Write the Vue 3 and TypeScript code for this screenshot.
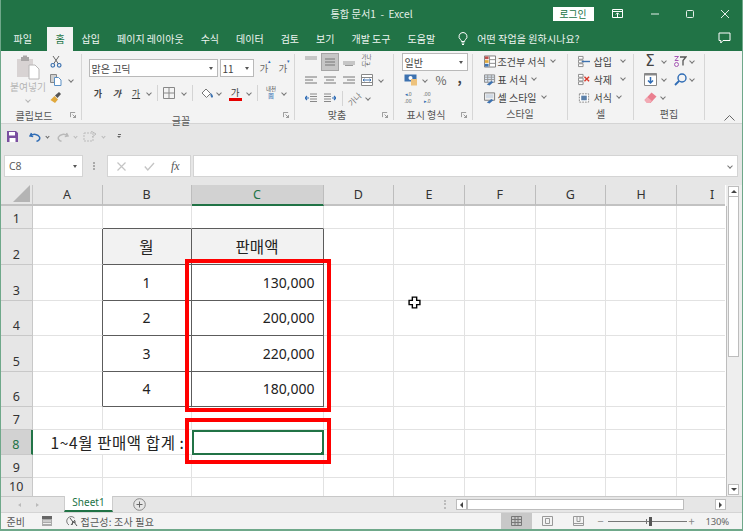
<script setup lang="ts">
const tabs = ['파일', '홈', '삽입', '페이지 레이아웃', '수식', '데이터', '검토', '보기', '개발 도구', '도움말']
const colWidths = [31.5, 70, 89, 132, 70.7, 70.7, 70.7, 70.7, 70.7, 48.5]
const colNames = ['', 'A', 'B', 'C', 'D', 'E', 'F', 'G', 'H', 'I']
const rowHeights = [21, 23, 36, 35.5, 35.5, 35.5, 35.5, 23, 25, 22.5, 19.5]
const gridCols = colWidths.map((w) => w + 'px').join(' ')
const gridRows = rowHeights.map((h) => h + 'px').join(' ')

const content: Record<string, string> = {
  'B2': '월', 'C2': '판매액',
  'B3': '1', 'B4': '2', 'B5': '3', 'B6': '4',
  'C3': '130,000', 'C4': '200,000', 'C5': '220,000', 'C6': '180,000',
  'B8': '1~4월 판매액 합계 :'
}

interface Cell { key: string; text: string; cls: string[] }
const cells: Cell[] = []
for (let r = 0; r < rowHeights.length; r++) {
  for (let c = 0; c < colNames.length; c++) {
    const cls: string[] = []
    let text = ''
    const key = colNames[c] + r
    if (r === 0 && c === 0) {
      cls.push('corner')
    } else if (r === 0) {
      cls.push('col-head')
      text = colNames[c]
      if (c === 3) cls.push('head-on')
      if (c === 9) cls.push('head-cut')
    } else if (c === 0) {
      cls.push('row-head')
      text = String(r)
      if (r === 8) cls.push('row-on')
    } else {
      cls.push('cell')
      text = content[key] ?? ''
      const inTable = r >= 2 && r <= 6 && (c === 2 || c === 3)
      if (inTable) cls.push('tbl')
      if (r === 2 && inTable) cls.push('tbl-head')
      if (r >= 3 && r <= 6 && c === 3) cls.push('num')
      if (r >= 2 && r <= 6 && c === 1) cls.push('tbl-left')
      if (r === 1 && (c === 2 || c === 3)) cls.push('tbl-top')
      if (r === 8 && c === 1) cls.push('no-right')
      if (r === 8 && c === 2) cls.push('overflow-left')
      if (r === 8 && c === 3) cls.push('selected')
      if (r === 10) cls.push('last-row')
      if (c === 9) cls.push('last-col')
    }
    cells.push({ key, text, cls })
  }
}
</script>

<template>
  <div class="win">
    <header class="title">
      <div class="title-text">통합 문서1&nbsp; -&nbsp; Excel</div>
      <div class="login">로그인</div>
      <svg class="t-ic ic-display" viewBox="0 0 12 10"><path d="M.5.5h10v8H.5zM.5 2.5h10M5.5 8V4M3.8 5.5l1.7-1.7 1.7 1.7" fill="none" stroke="#fff"/></svg>
      <svg class="t-ic ic-min" viewBox="0 0 10 10"><path d="M1 5h8" stroke="#e4efe9"/></svg>
      <svg class="t-ic ic-max" viewBox="0 0 10 10"><rect x="1.5" y="1.5" width="7" height="7" rx="1" fill="none" stroke="#e4efe9"/></svg>
      <svg class="t-ic ic-close" viewBox="0 0 10 10"><path d="M1 1l8 8M9 1l-8 8" stroke="#e4efe9"/></svg>
    </header>

    <nav class="tabs">
      <span v-for="t in tabs" :key="t" class="tab" :class="{ active: t === '홈' }">{{ t }}</span>
      <svg class="bulb" viewBox="0 0 12 14"><path d="M6 1a4 4 0 0 0-2.4 7.2c.6.5.8 1 .8 1.8h3.2c0-.8.2-1.3.8-1.8A4 4 0 0 0 6 1zM4.6 11.5h2.8M5 13h2" fill="none" stroke="#fff"/></svg>
      <span class="tell">어떤 작업을 원하시나요?</span>
      <svg class="comment" viewBox="0 0 13 12"><path d="M1 1h11v7.5H5L2.8 11V8.5H1z" fill="none" stroke="#fff"/></svg>
    </nav>

    <section class="ribbon">
      <div class="group g-clip">
        <div class="g-body clip-body">
          <div class="paste">
            <svg class="paste-ic" viewBox="0 0 24 25">
              <path d="M1 4h16v18H1z" fill="#d8d3d3"/>
              <path d="M5 2h8v4H5z" fill="#a9a6a6"/>
              <path d="M7 .5h4v2H7z" fill="#a9a6a6"/>
              <path d="M13 10h6l4 4v10H13z" fill="#fff" stroke="#b8b6b6"/>
            </svg>
            <span class="paste-label">붙여넣기</span>
            <i class="chev light"></i>
          </div>
          <div class="clip-tools">
            <svg class="ic" viewBox="0 0 12 13"><path d="M3 1l5.5 8M9 1L3.5 9" fill="none" stroke="#666"/><circle cx="2.8" cy="10.3" r="1.8" fill="none" stroke="#3d72b0" stroke-width="1.2"/><circle cx="9.2" cy="10.3" r="1.8" fill="none" stroke="#3d72b0" stroke-width="1.2"/></svg>
            <div class="tool-row">
              <svg class="ic" viewBox="0 0 12 13"><path d="M.5 1.5h6v8h-6z" fill="#cfcfcf" stroke="#888"/><path d="M4.5 4.5h4l2.500 2.500v5.500h-6.500z" fill="#fff" stroke="#5a8fc4"/></svg>
              <i class="chev dark"></i>
            </div>
            <svg class="ic" viewBox="0 0 12 13"><path d="M.5 9l4-4 3.500 3.500-3 3.500z" fill="#e0a83c"/><path d="M5 4.500l4-3.500 2 2-3.500 4z" fill="#555"/></svg>
          </div>
        </div>
        <div class="g-label has-launch">클립보드<svg class="launch" viewBox="0 0 7 7"><path d="M.5 6V.5H6M3 3l3.500 3.500M6.500 3.500v3h-3" fill="none" stroke="#888"/></svg></div>
      </div>

      <div class="group g-font">
        <div class="g-body font-body">
          <div class="font-row">
            <div class="select font-name"><span>맑은 고딕</span><i class="caret"></i></div>
            <div class="select font-size"><span>11</span><i class="caret"></i></div>
            <span class="ga-btn ga-first">가<sup>▴</sup></span>
            <span class="ga-btn">가<sup>▾</sup></span>
          </div>
          <div class="font-row second">
            <b class="ga b1">가</b>
            <em class="ga i1">가</em>
            <span class="ga u1">가</span>
            <i class="chev dark c-a"></i>
            <span class="vsep sep-a"></span>
            <svg class="ic border-ic" viewBox="0 0 12 12"><path d="M.5.5h11v11H.5zM6 .5v11M.5 6h11" fill="none" stroke="#888"/></svg>
            <i class="chev dark c-b"></i>
            <span class="vsep sep-b"></span>
            <svg class="ic fill-ic" viewBox="0 0 14 13"><path d="M2 6l4-4 4.500 4.500-4 4z" fill="#fff" stroke="#777"/><path d="M10.500 6c1.500 1 2.500 2.500 2.500 3.500 0 1-1 1.500-1.500 1s-1.500-2-1-4.500z" fill="#3d72b0"/></svg>
            <i class="chev dark c-c"></i>
            <span class="color-ga">가<em></em></span>
            <i class="chev dark c-d"></i>
            <span class="vsep sep-c"></span>
            <span class="phon"><span>내천</span><span class="blue">圓</span></span>
            <i class="chev dark c-e"></i>
          </div>
        </div>
        <div class="g-label has-launch">글꼴<svg class="launch" viewBox="0 0 7 7"><path d="M.5 6V.5H6M3 3l3.500 3.500M6.500 3.500v3h-3" fill="none" stroke="#888"/></svg></div>
      </div>

      <div class="group g-align">
        <div class="g-body align-body">
          <div class="al-row">
            <span class="al-btn"><svg class="al al-top" viewBox="0 0 12 8"><path d="M0 1h12M0 3h12" stroke="#999"/></svg></span>
            <span class="al-btn on"><svg class="al" viewBox="0 0 12 8"><path d="M1 1h10M1 4h10M1 7h10" stroke="#777"/></svg></span>
            <span class="al-btn"><svg class="al" viewBox="0 0 12 8"><path d="M0 4h12M0 6h12M2 7.500h8" stroke="#999"/></svg></span>
            <span class="wrap-ic"><span>가나</span><span>다↵</span></span>
          </div>
          <div class="al-row">
            <span class="al-btn"><svg class="al" viewBox="0 0 12 8"><path d="M0 1h12M0 4h8M0 7h12" stroke="#777"/></svg></span>
            <span class="al-btn"><svg class="al" viewBox="0 0 12 8"><path d="M0 1h12M2 4h8M0 7h12" stroke="#777"/></svg></span>
            <span class="al-btn"><svg class="al" viewBox="0 0 12 8"><path d="M0 1h12M4 4h8M0 7h12" stroke="#777"/></svg></span>
            <svg class="merge" viewBox="0 0 12 12"><path d="M.5.5h11v11H.5z" fill="#fff" stroke="#888"/><path d="M.5 3.500h11M.5 8.500h11" stroke="#888"/><path d="M2 6h8M3.500 4.800L2 6l1.500 1.200M8.500 4.800L10 6 8.500 7.200" fill="none" stroke="#3d72b0"/></svg>
            <i class="chev dark c-m"></i>
          </div>
          <div class="al-row">
            <span class="al-btn"><svg class="ind" viewBox="0 0 12 10"><path d="M5 1h7M5 3.500h7M5 6h7M5 8.500h7" stroke="#888"/><path d="M0 5h4M2 3L0 5l2 2" fill="none" stroke="#2f6cb5" stroke-width="1.200"/></svg></span>
            <span class="al-btn"><svg class="ind" viewBox="0 0 12 10"><path d="M0 1h7M0 3.500h7M0 6h7M0 8.500h7" stroke="#888"/><path d="M8 5h4M10 3l2 2-2 2" fill="none" stroke="#2f6cb5" stroke-width="1.200"/></svg></span>
            <span class="vsep sep-d"></span>
            <span class="orient">가나</span>
            <i class="chev dark c-o"></i>
          </div>
        </div>
        <div class="g-label has-launch">맞춤<svg class="launch" viewBox="0 0 7 7"><path d="M.5 6V.5H6M3 3l3.500 3.500M6.500 3.500v3h-3" fill="none" stroke="#888"/></svg></div>
      </div>

      <div class="group g-num">
        <div class="g-body num-body">
          <div class="select num-select"><span>일반</span><i class="caret"></i></div>
          <div class="num-row">
            <svg class="ic cur" viewBox="0 0 14 12"><rect x=".5" y=".5" width="12" height="7" fill="#3d72b0"/><circle cx="6.500" cy="4" r="2" fill="#fff"/><rect x="7" y="5" width="6" height="6.500" fill="#edc27c"/></svg>
            <i class="chev dark c-n"></i>
            <span class="pct">%</span>
            <span class="comma">,</span>
          </div>
          <div class="num-row dec">
            <span class="dec-ic"><span><i>◂</i>.0</span><span>.00</span></span>
            <span class="dec-ic"><span>.00</span><span><i>▸</i>.0</span></span>
          </div>
        </div>
        <div class="g-label has-launch">표시 형식<svg class="launch" viewBox="0 0 7 7"><path d="M.5 6V.5H6M3 3l3.500 3.500M6.500 3.500v3h-3" fill="none" stroke="#888"/></svg></div>
      </div>

      <div class="group g-style">
        <div class="g-body list-body">
          <div class="li">
            <svg class="ic l-ic" viewBox="0 0 13 13"><path d="M.5.5h12v12H.5z" fill="#fff" stroke="#777"/><path d="M1 1h4v3H1z" fill="#c0504d"/><path d="M1 5h4v3H1z" fill="#e0a83c"/><path d="M1 9h4v3H1z" fill="#3d72b0"/><path d="M6 1v11M6 4.500h6M6 8.500h6" stroke="#888"/></svg>
            <span>조건부 서식</span><i class="chev dark"></i>
          </div>
          <div class="li">
            <svg class="ic l-ic" viewBox="0 0 13 13"><path d="M.5 1.500h11v8H.5z" fill="#dbe6f2" stroke="#888"/><path d="M.5 4h11M.5 6.500h11M4 1.500v8M8 1.500v8" stroke="#999"/><path d="M3 12l5-4 2 1.500-4 3.500z" fill="#3d72b0"/></svg>
            <span>표 서식</span><i class="chev dark"></i>
          </div>
          <div class="li">
            <svg class="ic l-ic" viewBox="0 0 13 13"><path d="M.5 1.500h11v8H.5z" fill="#eee" stroke="#777"/><path d="M2 3h8v4H2z" fill="#cfd8e3"/><path d="M3 12l5-4 2 1.500-4 3.500z" fill="#3d72b0"/></svg>
            <span>셀 스타일</span><i class="chev dark"></i>
          </div>
        </div>
        <div class="g-label">스타일</div>
      </div>

      <div class="group g-cell">
        <div class="g-body list-body cell-list">
          <div class="li">
            <svg class="ic l-ic" viewBox="0 0 13 12"><path d="M.5.500h5v3h-5zM.5 4.500h5v3h-5zM.5 8.500h5v3h-5z" fill="#fff" stroke="#888"/><path d="M4 6h9" stroke="#3d72b0" stroke-width="1.500"/></svg>
            <span>삽입</span><i class="chev dark gapc"></i>
          </div>
          <div class="li">
            <svg class="ic l-ic" viewBox="0 0 13 12"><path d="M.5.500h5v3h-5zM.5 4.500h5v3h-5zM.5 8.500h5v3h-5z" fill="#fff" stroke="#888"/><path d="M7 3l5 5M12 3L7 8" stroke="#d9382a" stroke-width="1.500"/></svg>
            <span>삭제</span><i class="chev dark gapc"></i>
          </div>
          <div class="li">
            <svg class="ic l-ic" viewBox="0 0 13 12"><path d="M1.500 2h10v9h-10z" fill="#fff" stroke="#888" stroke-dasharray="2 1"/><path d="M3.500 4h6v5h-6z" fill="#5a7fa8"/></svg>
            <span>서식</span><i class="chev dark"></i>
          </div>
        </div>
        <div class="g-label">셀</div>
      </div>

      <div class="group g-edit">
        <div class="g-body edit-body">
          <div class="ed-row">
            <span class="sigma">Σ</span><i class="chev dark c-s"></i>
            <svg class="ic sort" viewBox="0 0 13 12"><path d="M.5 1h4L1 5h3.500" fill="none" stroke="#a658b5"/><circle cx="2.500" cy="9" r="2" fill="none" stroke="#a658b5"/><path d="M6 1.500h6l-3 3.500v5" fill="none" stroke="#555" stroke-width="1.300"/></svg>
            <i class="chev dark"></i>
          </div>
          <div class="ed-row">
            <svg class="ic down" viewBox="0 0 13 13"><path d="M.5.500h12v12H.5z" fill="#fff" stroke="#888"/><path d="M.5 1.500h12" stroke="#888" stroke-width="2"/><path d="M6.500 4v6M4 7.500l2.500 2.500L9 7.500" fill="none" stroke="#2f6cb5" stroke-width="1.500"/></svg>
            <i class="chev dark c-s"></i>
            <svg class="ic find" viewBox="0 0 13 13"><circle cx="8" cy="5" r="4" fill="none" stroke="#2f6cb5" stroke-width="1.400"/><path d="M5 8l-4 4" stroke="#2f6cb5" stroke-width="1.800"/></svg>
            <i class="chev dark"></i>
          </div>
          <div class="ed-row">
            <svg class="ic erase" viewBox="0 0 13 13"><path d="M.5 9l7-7.500 5 4-6 6.500H3z" fill="#ea7f8f"/><path d="M.5 9l3-3 4.500 4-2 2H3z" fill="#f2aab4"/></svg>
            <i class="chev dark"></i>
          </div>
        </div>
        <div class="g-label">편집</div>
      </div>

      <div class="collapse-area">
        <svg class="collapse" viewBox="0 0 11 6"><path d="M.5 5.500L5.500.5l5 5" fill="none" stroke="#666"/></svg>
      </div>
    </section>

    <div class="qat">
      <svg class="q-save" viewBox="0 0 11 11"><path d="M0 0h9l2 2v9H0z" fill="#7a4fa0"/><path d="M2 1h6v3.500H2z" fill="#fff"/><path d="M2.500 7h6v4h-6z" fill="#fff"/></svg>
      <svg class="q-undo" viewBox="0 0 12 10"><path d="M2.500 1L1 4l3.200.6M1.500 3.800c3-2.500 7.500-1.500 9 1.200 1 2.500-1.500 4-3 4.300" fill="none" stroke="#2f6cb5" stroke-width="1.500"/></svg>
      <i class="chev tiny c-q1"></i>
      <svg class="q-redo" viewBox="0 0 12 10"><path d="M9.500 1L11 4l-3.200.6M10.500 3.800c-3-2.500-7.500-1.500-9 1.200-1 2.500 1.500 4 3 4.300" fill="none" stroke="#b9b9b9" stroke-width="1.500"/></svg>
      <i class="chev tiny lightc c-q2"></i>
      <svg class="q-sheet" viewBox="0 0 14 11"><path d="M1 2h9v8H1z" fill="none" stroke="#bbb" stroke-dasharray="2 1"/><path d="M8 0l5 3-4 3" fill="none" stroke="#bbb"/></svg>
      <i class="chev tiny lightc c-q3"></i>
      <span class="q-more"></span>
    </div>

    <div class="formula">
      <div class="name-box"><span>C8</span><i class="caret"></i></div>
      <span class="dots"></span>
      <div class="fx-box">
        <svg class="fx-x" viewBox="0 0 9 9"><path d="M.5.500l8 8M8.500.500l-8 8" stroke="#c4c4c4" stroke-width="1.200"/></svg>
        <svg class="fx-v" viewBox="0 0 11 9"><path d="M.8 4.500l3 3.500L10 1" fill="none" stroke="#c4c4c4" stroke-width="1.300"/></svg>
        <span class="fx">fx</span>
      </div>
      <div class="fbar"><i class="chev dark"></i></div>
    </div>

    <div class="sheet-area">
      <div class="sheet">
        <div class="grid" :style="{ gridTemplateColumns: gridCols, gridTemplateRows: gridRows }">
          <div v-for="c in cells" :key="c.key" :class="c.cls">
            <svg v-if="c.cls.includes('corner')" class="tri" viewBox="0 0 17 17"><path d="M17 0v17H0z" fill="#b4b4b4"/></svg>
            <span v-else>{{ c.text }}</span>
            <i v-if="c.cls.includes('selected')" class="handle"></i>
          </div>
        </div>
        <div class="red red-a"></div>
        <div class="red red-b"></div>
        <svg class="cursor" viewBox="0 0 12 12"><path d="M4 1h4v3h3v4H8v3H4V8H1V4h3z" fill="#fff" stroke="#000" stroke-width="1.300"/></svg>
      </div>
      <div class="vscroll">
        <div class="sb-btn"><i class="up"></i></div>
        <div class="v-thumb"></div>
        <div class="sb-btn v-down"><i class="down-tri"></i></div>
      </div>
    </div>

    <div class="sheetbar">
      <i class="nav-l"></i>
      <i class="nav-r"></i>
      <div class="sheet-tab">Sheet1</div>
      <svg class="add" viewBox="0 0 13 13"><circle cx="6.500" cy="6.500" r="5.800" fill="none" stroke="#888"/><path d="M6.500 3.500v6M3.500 6.500h6" stroke="#666"/></svg>
      <span class="h-dots"></span>
      <div class="hscroll">
        <div class="sb-btn"><i class="left-tri"></i></div>
        <div class="h-thumb"></div>
        <div class="sb-btn h-right"><i class="right-tri"></i></div>
      </div>
    </div>

    <footer class="status">
      <span class="st-ready">준비</span>
      <svg class="st-macro" viewBox="0 0 10 10"><path d="M0 0h10v3H0z" fill="#666"/><path d="M0 3h10v7H0z" fill="#aaa"/><path d="M1 4.500h8v1H1zM1 7h8v1H1z" fill="#eee"/></svg>
      <svg class="st-acc" viewBox="0 0 13 12"><path d="M9.500 3A4.500 4.500 0 1 0 4 10" fill="none" stroke="#777"/><path d="M5 3l3 4-1 3M7 7l4 0M9 7l3 4M10 5l-4 5" fill="none" stroke="#555"/></svg>
      <span class="st-text">접근성: 조사 필요</span>
      <div class="st-right">
        <span class="view on"><svg viewBox="0 0 11 10"><path d="M.5.500h10v9H.5zM4 .5v9M7 .5v9M.5 3.500h10M.5 6.500h10" fill="none" stroke="#777"/></svg></span>
        <span class="view"><svg viewBox="0 0 11 10"><path d="M.5.500h10v9H.5z" fill="none" stroke="#999"/><path d="M3.500 2.500h4v5h-4z" fill="none" stroke="#999"/></svg></span>
        <span class="view"><svg viewBox="0 0 11 10"><path d="M.5.500h10v9H.5zM.5 7.500h10M4 .5v5h3v-5" fill="none" stroke="#999"/></svg></span>
        <span class="zm minus">−</span>
        <div class="slider"><i class="tick"></i><i class="thumb"></i></div>
        <span class="zm plus">+</span>
        <span class="pct-text">130%</span>
      </div>
    </footer>
  </div>
</template>

<style>
html, body { margin: 0; padding: 0; background: #fff; }
</style>

<style scoped>
.win {
  width: 743px; height: 531px; box-sizing: border-box; overflow: hidden;
  display: flex; flex-direction: column; background: #e6e6e6;
  border-left: 1.5px solid #6fa88a; border-right: 1.5px solid #6fa88a; border-bottom: 2px solid #6fa88a;
  font-family: "Noto Sans CJK KR", "Noto Sans", sans-serif; color: #444;
  position: relative;
}
svg { display: block; flex: none; }
i { display: block; flex: none; font-style: normal; }

.title { height: 26px; flex: none; background: #217346; margin: 0 -1.5px; position: relative; display: flex; align-items: center; color: #fff; }
.title-text { margin-left: 331px; width: 84px; font-size: 10.2px; white-space: nowrap; color: #e3efe8; padding-top: 1px; }
.login { margin-left: 138px; width: 41px; height: 14px; background: #fff; color: #217346; font-size: 9.8px; line-height: 14px; text-align: center; margin-top: 2px; }
.t-ic { width: 12px; height: 10px; }
.ic-display { margin-left: 18px; margin-top: 2px; }
.ic-min { margin-left: 26px; width: 10px; margin-top: 2px; }
.ic-max { margin-left: 25px; width: 10px; margin-top: 2px; }
.ic-close { margin-left: 25px; width: 10px; margin-top: 2px; }

.tabs { height: 25px; flex: none; background: #217346; margin: 0 -1.5px; display: flex; align-items: flex-end; padding-left: 14px; color: #eef5f1; font-size: 10px; position: relative; }
.tab { height: 25px; line-height: 25px; margin-right: 17px; white-space: nowrap; }
.tab.active { background: #f3f3f3; color: #217346; padding: 0 8px; margin-left: -1.5px; margin-right: 9px; height: 24px; line-height: 24px; }
.bulb { width: 12px; height: 15px; margin: 0 8px 5px 5px; }
.tell { height: 25px; line-height: 25px; white-space: nowrap; letter-spacing: .1px; }
.comment { position: absolute; right: 13px; top: 6px; width: 13px; height: 12px; }

.ribbon { height: 72px; flex: none; background: #f3f3f3; border-bottom: 1px solid #d4d4d4; display: flex; box-sizing: content-box; }
.group { display: flex; flex-direction: column; border-right: 1px solid #d6d6d6; margin: 3px 0 3px; height: 66px; box-sizing: border-box; position: relative; }
.g-body { height: 56px; flex: none; }
.g-label { height: 10px; line-height: 12px; font-size: 10px; text-align: center; color: #555; white-space: nowrap; }
.g-label.has-launch { padding-right: 14px; }
.launch { position: absolute; right: 5px; bottom: 2px; width: 6px; height: 6px; }
.g-clip { width: 81px; }
.g-font { width: 213px; }
.g-align { width: 99px; }
.g-num { width: 79px; }
.g-style { width: 95px; }
.g-cell { width: 66px; }
.g-edit { width: 71px; }

.chev { width: 3px; height: 3px; border-right: 1px solid #999; border-bottom: 1px solid #999; transform: rotate(45deg); }
.chev.dark { border-color: #777; }
.chev.light { border-color: #b5b5b5; }
.chev.tiny { width: 2px; height: 2px; border-color: #666; }
.chev.lightc { border-color: #bbb; }
.caret { width: 0; height: 0; border-left: 2.500px solid transparent; border-right: 2.500px solid transparent; border-top: 3px solid #555; }

.clip-body { display: flex; padding-left: 6px; }
.paste { width: 42px; display: flex; flex-direction: column; align-items: center; }
.paste-ic { width: 24px; height: 25px; margin-top: 1px; }
.paste-label { font-size: 9.8px; color: #b5b5b5; line-height: 12px; margin-top: 1px; white-space: nowrap; }
.paste .chev { margin-top: 5px; }
.clip-tools { margin-left: 1px; display: flex; flex-direction: column; gap: 5px; padding-top: 1px; }
.ic { width: 12px; height: 13px; }
.tool-row { display: flex; align-items: center; gap: 7px; }

.font-body { padding: 5px 0 0 6.5px; display: flex; flex-direction: column; }
.font-row { display: flex; align-items: center; height: 18px; }
.font-row.second { margin-top: 7px; height: 18px; position: relative; font-size: 9px; }
.select { background: #fff; border: 1px solid #b9b9b9; box-sizing: border-box; height: 18px; display: flex; align-items: center; justify-content: space-between; padding: 0 4px 0 2px; font-size: 10px; color: #444; }
.font-name { width: 129px; }
.font-size { width: 34px; margin-left: 2px; }
.ga-btn { font-size: 9.500px; color: #666; position: relative; width: 11px; margin-left: 8px; white-space: nowrap; }
.ga-first { margin-left: 6px; }
.ga-btn sup { position: absolute; left: 8px; top: -3px; font-size: 5px; color: #2f6cb5; line-height: 1; }
.ga { font-style: normal; color: #444; font-weight: 700; font-size: 9px; width: 19px; text-align: center; }
.u1 { text-decoration: underline; font-weight: 400; }
.i1 { font-style: italic; }
.c-a { margin-left: 1px; }
.vsep { width: 1px; height: 16px; background: #d4d4d4; flex: none; }
.sep-a { margin-left: 6px; }
.border-ic { margin-left: 5px; width: 12px; height: 12px; }
.c-b { margin-left: 7px; }
.sep-b { margin-left: 6px; }
.fill-ic { margin-left: 7px; width: 14px; height: 13px; }
.c-c { margin-left: 3px; }
.color-ga { margin-left: 8px; width: 13px; text-align: center; font-size: 9.5px; color: #444; line-height: 12px; position: relative; height: 15px; }
.color-ga em { display: block; height: 3px; background: #e60000; }
.c-d { margin-left: 5px; }
.sep-c { margin-left: 6px; }
.phon { margin-left: 7px; width: 13px; font-size: 5.500px; line-height: 7px; display: flex; flex-direction: column; align-items: center; color: #555; white-space: nowrap; }
.phon .blue { color: #2f6cb5; }
.c-e { margin-left: 4px; }

.align-body { padding: 0 0 0 7px; margin-top: -1px; display: flex; flex-direction: column; }
.al-row { display: flex; align-items: center; height: 18px; }
.al-btn { width: 18px; height: 18px; display: flex; align-items: center; justify-content: center; box-sizing: border-box; margin-right: .800px; }
.al-btn.on { background: #c6c6c6; border: 1px solid #a5a5a5; }
.al { width: 12px; height: 8px; }
.al-top { margin-top: -4px; }
.ind { width: 12px; height: 10px; }
.wrap-ic { margin-left: 3px; margin-top: -3px; width: 16px; font-size: 5.500px; line-height: 7px; display: flex; flex-direction: column; color: #555; white-space: nowrap; }
.merge { width: 12px; height: 12px; margin-left: 3px; }
.c-m { margin-left: 6px; }
.sep-d { margin-left: 2px; height: 15px; }
.orient { font-size: 8px; color: #777; transform: rotate(-45deg); margin-left: 4px; width: 16px; white-space: nowrap; }
.c-o { margin-left: 3px; }

.num-body { padding: 0 0 0 7.5px; margin-top: -1px; display: flex; flex-direction: column; }
.num-select { width: 66px; }
.num-row { display: flex; align-items: center; height: 18px; }
.cur { width: 14px; height: 12px; margin-left: 2px; }
.c-n { margin-left: 5px; }
.pct { font-size: 12px; color: #666; margin-left: 9px; line-height: 14px; }
.comma { font-size: 13px; font-weight: 700; color: #444; margin-left: 11px; line-height: 10px; margin-top: -4px; }
.num-row.dec { gap: 5px; }
.dec-ic { width: 11px; margin-left: 3px; font-size: 5px; line-height: 7px; display: flex; flex-direction: column; color: #666; font-family: "Noto Sans", sans-serif; white-space: nowrap; }
.dec-ic i { display: inline; color: #2f6cb5; font-size: 5px; }

.list-body { padding: 0 0 0 10.5px; margin-top: -2px; display: flex; flex-direction: column; }
.li { display: flex; align-items: center; height: 18px; font-size: 10px; color: #444; white-space: nowrap; }
.l-ic { margin-right: 2px; }
.li .chev { margin-left: 5px; margin-top: -2px; }
.list-body.cell-list { padding-left: 9.5px; }
.cell-list .li span { margin-left: 2px; }
.gapc { margin-left: 9px !important; }

.edit-body { padding: 0 0 0 9.5px; margin-top: -2px; display: flex; flex-direction: column; }
.ed-row { display: flex; align-items: center; height: 18px; }
.sigma { width: 13px; font-size: 15px; line-height: 16px; color: #444; text-align: center; font-family: "DejaVu Sans", sans-serif; }
.c-s { margin: 0 7.5px 0 5.5px; }
.ed-row .sort, .ed-row .find { margin-right: 3px; width: 13px; }
.down { width: 13px; }
.erase { width: 13px; margin-right: 4px; }

.collapse-area { flex: 1; position: relative; }
.collapse { position: absolute; right: 7px; bottom: 2px; width: 11px; height: 6px; }

.qat { height: 21px; padding-top: 2px; flex: none; display: flex; align-items: center; padding-left: 5.5px; margin-bottom: 8px; }
.q-save { width: 11px; height: 11px; }
.q-undo { width: 12px; height: 10px; margin-left: 11px; }
.c-q1 { margin-left: 5px; }
.q-redo { width: 12px; height: 10px; margin-left: 8px; }
.c-q2 { margin-left: 5px; }
.q-sheet { width: 14px; height: 11px; margin-left: 6px; }
.c-q3 { margin-left: 5px; }
.q-more { width: 3px; height: 4px; margin-left: 13px; border-top: 1px solid #666; position: relative; }
.q-more::after { content: ""; position: absolute; top: 1px; left: -1px; border-left: 2.500px solid transparent; border-right: 2.500px solid transparent; border-top: 2.500px solid #666; }

.formula { height: 22px; flex: none; display: flex; align-items: stretch; padding-left: 3px; margin-bottom: 8px; }
.name-box { width: 79px; background: #fff; border: 1px solid #d4d4d4; box-sizing: border-box; display: flex; align-items: center; justify-content: space-between; padding: 0 5px 0 4px; font-size: 10.500px; color: #555; font-family: "Open Sans", sans-serif; }
.dots { width: 2px; height: 8px; margin: 7px 0 0 10px; border-left: 2px dotted #aaa; }
.fx-box { width: 84px; margin-left: 10px; background: #fff; border: 1px solid #d4d4d4; box-sizing: border-box; display: flex; align-items: center; }
.fx-x { width: 9px; height: 9px; margin-left: 9px; }
.fx-v { width: 11px; height: 9px; margin-left: 18px; }
.fx { font-family: "Liberation Serif", serif; font-style: italic; font-size: 12px; margin-left: 16px; color: #555; }
.fbar { width: 545px; margin-left: 2px; background: #fff; border: 1px solid #d4d4d4; box-sizing: border-box; display: flex; align-items: center; justify-content: flex-end; padding-right: 5px; }

.sheet-area { height: 311px; flex: none; display: flex; }
.sheet { position: relative; width: 724.5px; flex: none; }
.grid { display: grid; height: 311px; overflow: hidden; background: #fff; }
.grid > div { box-sizing: border-box; font-family: "Noto Sans", "Noto Sans CJK KR", sans-serif; }

.corner { background: #e6e6e6; border-right: 1px solid #c8c8c8; border-bottom: 2px solid #c2c2c2; display: flex; align-items: flex-end; justify-content: flex-end; padding: 0 2px 2px 0; }
.tri { width: 17px; height: 17px; }
.col-head { background: #e6e6e6; border-right: 1px solid #bdbdbd; border-bottom: 2px solid #c2c2c2; text-align: center; font-size: 12.500px; line-height: 19px; color: #333; }
.col-head.head-on { background: #d2d2d2; color: #217346; border-bottom: 2px solid #217346; }
.col-head.head-cut { border-right: none; padding-left: 22px; }
.row-head { background: #e6e6e6; border-right: 1px solid #c8c8c8; border-bottom: 1px solid #c8c8c8; text-align: center; font-size: 12.500px; color: #333; display: flex; align-items: flex-end; justify-content: center; line-height: 19px; }
.row-head.row-on { background: #d2d2d2; color: #217346; border-right: 2px solid #217346; }

.cell { background: #fff; border-right: 1px solid #e2e2e2; border-bottom: 1px solid #e2e2e2; font-size: 14px; color: #222; display: flex; align-items: center; justify-content: center; position: relative; white-space: nowrap; }
.cell.last-row { border-bottom: none; }
.cell.last-col { border-right: none; }
.cell.tbl { border-right: 1px solid #5c5c5c; border-bottom: 1px solid #5c5c5c; }
.cell.tbl-head { background: #f2f2f2; font-size: 15.5px; }
.cell.tbl-left { border-right: 1px solid #5c5c5c; }
.cell.tbl-top { border-bottom: 1px solid #5c5c5c; }
.cell.num { justify-content: flex-end; padding-right: 8px; }
.cell.no-right { border-right: none; }
.cell.overflow-left { justify-content: flex-end; padding-right: 7px; border-right: none; }
.cell.overflow-left span { font-family: "Noto Sans CJK KR", "Noto Sans", sans-serif; font-size: 15.5px; letter-spacing: .6px; }
.cell.selected { border: 2px solid #217346; }
.handle { position: absolute; right: -3px; bottom: -3px; width: 4px; height: 4px; background: #217346; }

.red { position: absolute; border: 4px solid #f00; box-sizing: border-box; pointer-events: none; }
.red-a { left: 183.5px; top: 74px; width: 146px; height: 153px; }
.red-b { left: 183.5px; top: 233px; width: 146px; height: 46px; }
.cursor { position: absolute; left: 406.5px; top: 111px; width: 13px; height: 13px; }

.vscroll { flex: 1; background: #eeeeee; display: flex; flex-direction: column; align-items: center; padding-top: 1px; position: relative; }
.vscroll::before { content: ""; position: absolute; left: 0; top: 21px; bottom: 0; width: 1px; background: #bdbdbd; }
.sb-btn { width: 11px; height: 11px; background: #fff; border: 1px solid #bdbdbd; box-sizing: border-box; display: flex; align-items: center; justify-content: center; flex: none; }
.up { border-left: 3px solid transparent; border-right: 3px solid transparent; border-bottom: 3px solid #444; }
.down-tri { border-left: 3px solid transparent; border-right: 3px solid transparent; border-top: 3px solid #444; }
.left-tri { border-top: 3px solid transparent; border-bottom: 3px solid transparent; border-right: 3px solid #444; }
.right-tri { border-top: 3px solid transparent; border-bottom: 3px solid transparent; border-left: 3px solid #444; }
.v-thumb { width: 11px; height: 160px; background: #fff; border: 1px solid #bdbdbd; border-top: none; box-sizing: border-box; }
.v-down { margin-top: auto; margin-bottom: 1px; }

.sheetbar { height: 16px; flex: none; display: flex; align-items: center; border-top: 1px solid #c8c8c8; box-sizing: border-box; position: relative; }
.nav-l { margin-left: 17px; border-top: 2.500px solid transparent; border-bottom: 2.500px solid transparent; border-right: 3px solid #bbb; }
.nav-r { margin-left: 15px; border-top: 2.500px solid transparent; border-bottom: 2.500px solid transparent; border-left: 3px solid #bbb; }
.sheet-tab { margin-left: 25px; width: 49px; height: 16px; margin-top: -1px; background: #fff; color: #217346; border-bottom: 2px solid #217346; border-left: 1px solid #ccc; border-right: 1px solid #ccc; box-sizing: border-box; font-size: 10px; line-height: 13px; text-align: center; font-family: "Noto Sans", sans-serif; }
.add { width: 13px; height: 13px; margin-left: 20px; }
.h-dots { width: 2px; height: 9px; margin-left: 298px; border-left: 2px dotted #bbb; }
.hscroll { margin-left: 8px; width: 272px; display: flex; align-items: center; }
.h-thumb { width: 217px; height: 11px; background: #fff; border: 1px solid #bdbdbd; box-sizing: border-box; }
.h-right { margin-left: 31px; }

.status { height: 17px; flex: none; background: #f3f3f3; border-top: 1px solid #d4d4d4; box-sizing: border-box; display: flex; align-items: center; font-size: 10px; color: #555; position: relative; }
.st-ready { margin-left: 5.500px; width: 18px; white-space: nowrap; }
.st-macro { width: 10px; height: 10px; margin-left: 17px; }
.st-acc { width: 13px; height: 12px; margin-left: 13px; }
.st-text { margin-left: 3px; white-space: nowrap; letter-spacing: .2px; }
.st-right { margin-left: auto; display: flex; align-items: center; height: 100%; padding-right: 12.5px; }
.view { width: 31px; height: 100%; display: flex; align-items: center; justify-content: center; }
.view.on { background: #c8c8c8; }
.view svg { width: 11px; height: 10px; }
.zm { color: #888; font-size: 11px; width: 9px; text-align: center; }
.minus { margin-left: 2.5px; }
.slider { width: 79px; height: 1px; background: #777; margin: 0 .5px 0 2.5px; position: relative; }
.tick { position: absolute; left: 38px; top: -2px; width: 1px; height: 5px; background: #777; }
.thumb { position: absolute; left: 41.5px; top: -4px; width: 3px; height: 9px; background: #555; }
.pct-text { margin-left: 9.5px; width: 24px; font-family: "Noto Sans", sans-serif; font-size: 9.5px; letter-spacing: -.2px; color: #666; white-space: nowrap; }
</style>
